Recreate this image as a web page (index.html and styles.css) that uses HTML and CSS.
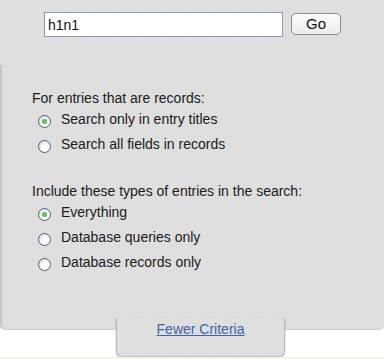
FILE: index.html
```html
<!DOCTYPE html>
<html>
<head>
<meta charset="utf-8">
<link rel="stylesheet" href="styles.css">
</head>
<body>
<div class="page">
  <div class="top">
    <form class="search">
      <input class="query" type="text" value="h1n1">
      <button class="go" type="button">Go</button>
    </form>
  </div>
  <div class="panel">
    <div class="group">
      <div class="heading">For entries that are records:</div>
      <div class="opt"><span class="radio checked"></span><span>Search only in entry titles</span></div>
      <div class="opt"><span class="radio"></span><span>Search all fields in records</span></div>
    </div>
    <div class="group second">
      <div class="heading">Include these types of entries in the search:</div>
      <div class="opt"><span class="radio checked"></span><span>Everything</span></div>
      <div class="opt"><span class="radio"></span><span>Database queries only</span></div>
      <div class="opt"><span class="radio"></span><span>Database records only</span></div>
    </div>
  </div>
  <div class="tab"><a href="#" class="fewer">Fewer Criteria</a></div>
  <div class="footline"></div>
</div>
</body>
</html>
```
FILE: styles.css
```css
html, body {
  margin: 0;
  padding: 0;
  background: #ffffff;
}
body {
  font-family: "Liberation Sans", Arial, sans-serif;
  font-size: 14px;
  color: #1a1a1a;
}
.page {
  width: 384px;
  height: 359px;
  overflow: hidden;
  background: #ffffff;
}
.top {
  height: 65px;
  box-sizing: border-box;
  padding: 12px 0 0 44px;
  background: repeating-linear-gradient(90deg, #dcdcdc 0 1px, #e0e0e0 1px 3px);
}
.search {
  display: flex;
  align-items: flex-start;
  gap: 8px;
  margin: 0;
}
.query {
  width: 239px;
  height: 25px;
  box-sizing: border-box;
  border: 1px solid #8a9cb2;
  background: #ffffff;
  padding: 0 0 0 3px;
  margin: 0;
  font-family: "Liberation Sans", Arial, sans-serif;
  font-size: 14px;
  color: #111;
  outline: none;
}
.go {
  width: 50px;
  height: 22px;
  margin: 1px 0 0 0;
  box-sizing: border-box;
  border: 1px solid #8c8c8c;
  border-radius: 5px;
  background: linear-gradient(#fbfbfb, #ececec);
  font-family: "Liberation Sans", Arial, sans-serif;
  font-size: 15px;
  color: #111;
  padding: 0;
  line-height: 20px;
}
.panel {
  height: 265px;
  box-sizing: border-box;
  border-left: 2px solid #c6c6c6;
  border-bottom: 1px solid #cdcdcd;
  border-radius: 0 0 5px 5px;
  padding: 26px 0 0 30px;
  background: repeating-linear-gradient(90deg, #dcdcdc 0 1px, #e0e0e0 1px 3px);
}
.group.second {
  margin-top: 28px;
}
.heading {
  line-height: 15px;
  height: 15px;
  white-space: nowrap;
}
.opt {
  display: flex;
  align-items: center;
  height: 25px;
  padding-left: 6px;
  white-space: nowrap;
}
.radio {
  flex: none;
  width: 13px;
  height: 13px;
  box-sizing: border-box;
  border-radius: 50%;
  border: 1px solid #4a5f7a;
  background: radial-gradient(circle at 65% 70%, #ffffff 0 35%, #dfe3ea 75%);
  margin: 6px 10px 0 0;
  display: flex;
  align-items: center;
  justify-content: center;
}
.radio.checked::after {
  content: "";
  width: 5px;
  height: 5px;
  border-radius: 50%;
  background: radial-gradient(circle, #5fc35a 0 40%, #2e9a2c 100%);
}
.tab {
  width: 169px;
  height: 39px;
  margin: -12px 0 0 116px;
  box-sizing: border-box;
  border-left: 1px solid #b9b9b9;
  border-right: 1px solid #b9b9b9;
  border-bottom: 1px solid #c2c2c2;
  border-radius: 0 0 6px 6px;
  box-shadow: 0 1px 2px rgba(0, 0, 0, 0.25);
  background: repeating-linear-gradient(90deg, #dcdcdc 0 1px, #e0e0e0 1px 3px);
  text-align: center;
  padding-top: 3px;
  line-height: 16px;
}
.fewer {
  color: #3e62a8;
  text-decoration: underline;
  font-size: 14px;
}
.footline {
  height: 2px;
  background: #f6f4ea;
}
```
